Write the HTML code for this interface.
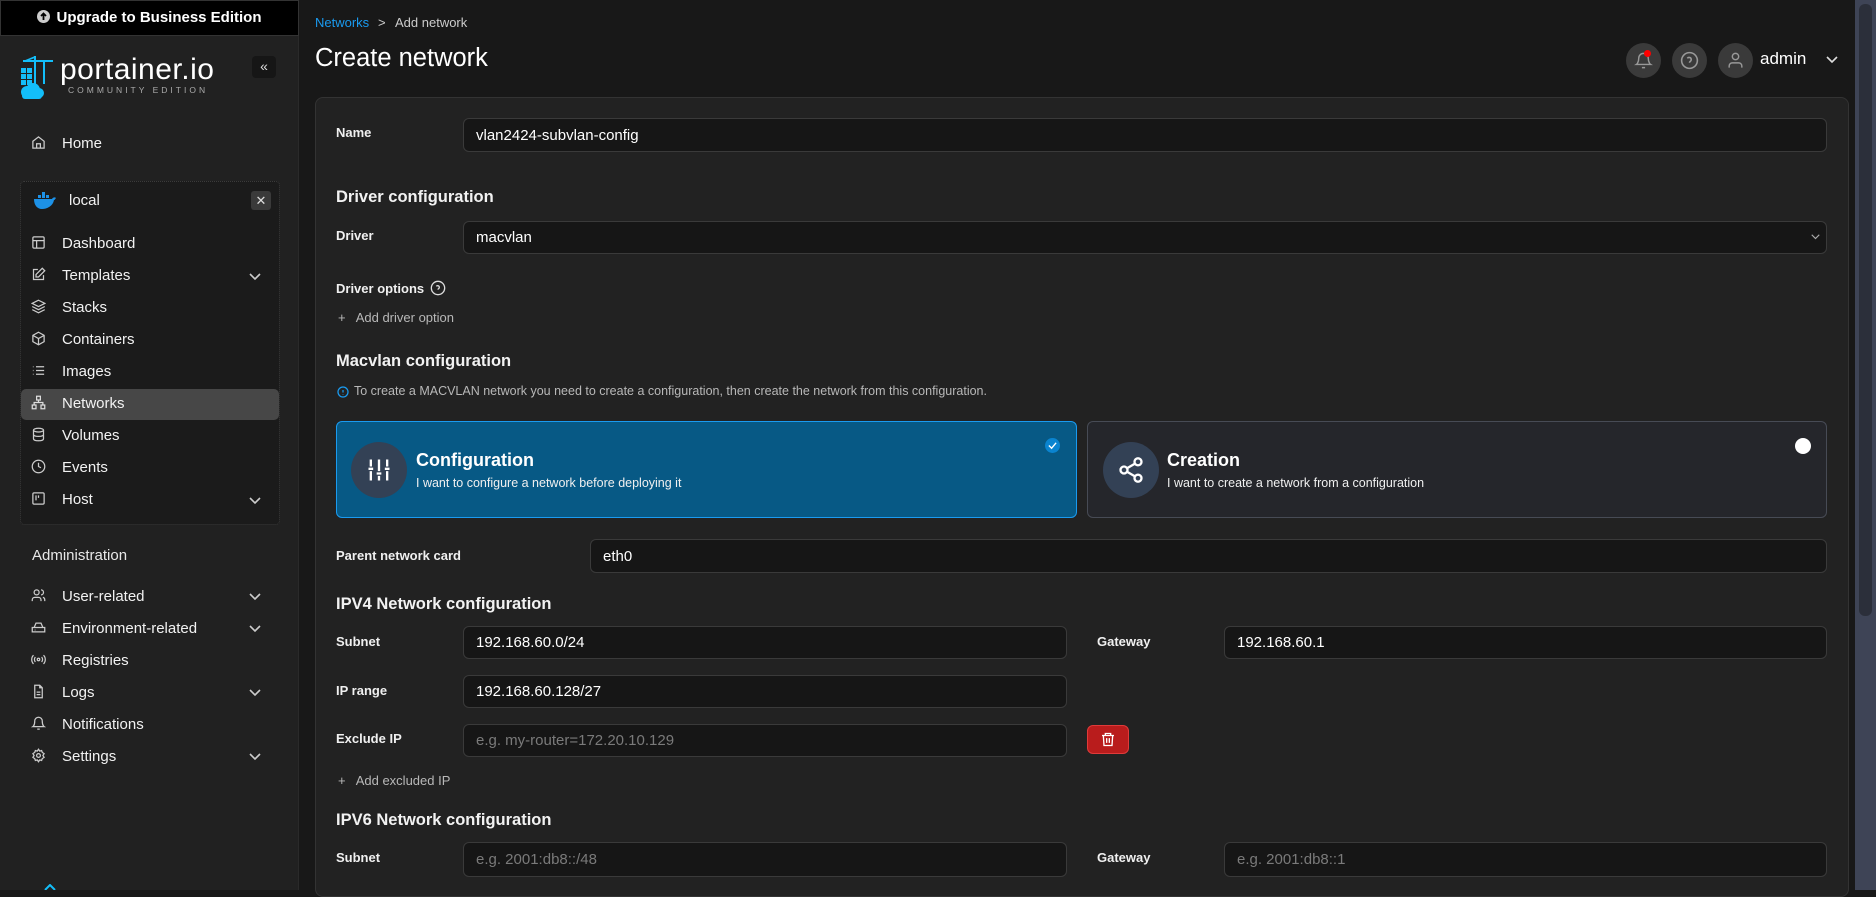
<!DOCTYPE html>
<html><head><meta charset="utf-8"><style>
*{box-sizing:border-box;margin:0;padding:0}
body{width:1876px;height:890px;overflow:hidden;background:#181818;font-family:"Liberation Sans",sans-serif;color:#fff;position:relative}
.a{position:absolute;white-space:nowrap}
.sb{position:absolute;left:0;top:0;width:299px;height:890px;background:#212121;border-right:1px solid #2a2a2a}
.up{position:absolute;left:0;top:0;width:299px;height:36px;background:#000;border:1px solid #333;font-weight:bold;font-size:15px;text-align:center;line-height:34px}
.ni{position:absolute;left:62px;font-size:15px;color:#f2f2f2;line-height:18px}
.ic{position:absolute;left:31px;width:15px;height:15px}
.chev{position:absolute;left:249px;width:12px;height:8px}
.lbl{position:absolute;font-size:13px;font-weight:bold;color:#f0f0f0;line-height:16px}
.inp{position:absolute;background:#161616;border:1px solid #3a3a3a;border-radius:6px;font-size:15px;color:#fff;padding-left:12px;display:flex;align-items:center}
.ph{color:#7a7a7a}
.h{position:absolute;font-size:16.5px;font-weight:bold;color:#f2f2f2}
.add{position:absolute;font-size:13px;color:#b8b8b8}
.cir{position:absolute;width:35px;height:35px;border-radius:50%;background:#3a3a3a}
</style></head><body>
<div class="sb">
 <div class="up"><span style="display:inline-block;width:13px;height:13px;border-radius:50%;background:#ccc;vertical-align:-1px;margin-right:6px;position:relative"><svg width="13" height="13" viewBox="0 0 13 13" style="position:absolute;left:0;top:0"><path d="M6.5 10V3.5M4 6l2.5-2.5L9 6" stroke="#000" stroke-width="1.8" fill="none"/></svg></span>Upgrade to Business Edition</div>
 <svg class="a" style="left:19px;top:54px" width="36" height="46" viewBox="0 0 36 46"><g fill="#13bef9"><rect x="15" y="2" width="2" height="34"/><rect x="4" y="6" width="30" height="2"/><path d="M16 2 L4 7 L5 8 L16 4z"/><rect x="2" y="14" width="5" height="5"/><rect x="8" y="14" width="5" height="5"/><rect x="2" y="20" width="5" height="5"/><rect x="8" y="20" width="5" height="5"/><rect x="2" y="26" width="5" height="5"/><rect x="8" y="26" width="5" height="5"/><rect x="24" y="8" width="2" height="22"/><circle cx="8" cy="38" r="6"/><circle cx="14" cy="36" r="7"/><circle cx="20" cy="39" r="5"/><rect x="3" y="38" width="20" height="7" rx="3"/></g></svg>
 <div class="a" style="left:60px;top:53px;font-size:30px;color:#fff;letter-spacing:0.5px">portainer.io</div>
 <div class="a" style="left:68px;top:85px;font-size:8.5px;letter-spacing:3px;color:#aaa">COMMUNITY EDITION</div>
 <div class="a" style="left:252px;top:56px;width:24px;height:22px;background:#161616;border-radius:4px;color:#ddd;font-size:14px;text-align:center;line-height:20px">«</div>
 <svg class="ic" style="top:135px" viewBox="0 0 24 24" fill="none" stroke="#ccc" stroke-width="2"><path d="M3 10l9-7 9 7v11H3z M9 21v-7h6v7"/></svg>
 <div class="ni" style="top:135px">Home</div>
 <div class="a" style="left:20px;top:181px;width:260px;height:344px;border:1px dotted #3b3b3b;border-radius:4px;background:#1b1b1b"></div>
 <svg class="a" style="left:33px;top:192px" width="24" height="17" viewBox="0 0 24 17"><g fill="#1d91e6"><rect x="5" y="3" width="3" height="3"/><rect x="9" y="3" width="3" height="3"/><rect x="9" y="0" width="3" height="3"/><rect x="13" y="3" width="3" height="3"/><path d="M1 7h18c1-2 3-2 4-1-1 1-1 2-2 2-1 6-7 9-12 9C4 17 1 13 1 7z"/></g></svg>
 <div class="ni" style="left:69px;top:192px">local</div>
 <div class="a" style="left:251px;top:191px;width:20px;height:19px;background:#3a3a3a;border-radius:3px;color:#ddd;font-size:13px;text-align:center;line-height:19px">✕</div>
 <div class="a" style="left:21px;top:389px;width:258px;height:31px;background:#474747;border-radius:5px"></div>
 <svg class="ic" style="top:235px" viewBox="0 0 24 24" fill="none" stroke="#ccc" stroke-width="2"><rect x="3" y="3" width="18" height="18" rx="2"/><path d="M3 9h18M9 9v12"/></svg><div class="ni" style="top:235px">Dashboard</div>
 <svg class="ic" style="top:267px" viewBox="0 0 24 24" fill="none" stroke="#ccc" stroke-width="2"><path d="M11 4H4v16h16v-7M18 2l4 4-10 10H8v-4z"/></svg><div class="ni" style="top:267px">Templates</div>
 <svg class="ic" style="top:299px" viewBox="0 0 24 24" fill="none" stroke="#ccc" stroke-width="2"><path d="M12 2l10 5-10 5L2 7zM2 12l10 5 10-5M2 17l10 5 10-5"/></svg><div class="ni" style="top:299px">Stacks</div>
 <svg class="ic" style="top:331px" viewBox="0 0 24 24" fill="none" stroke="#ccc" stroke-width="2"><path d="M12 2l9 5v10l-9 5-9-5V7zM3 7l9 5 9-5M12 12v10"/></svg><div class="ni" style="top:331px">Containers</div>
 <svg class="ic" style="top:363px" viewBox="0 0 24 24" fill="none" stroke="#ccc" stroke-width="2"><path d="M8 6h13M8 12h13M8 18h13M3 6h1M3 12h1M3 18h1"/></svg><div class="ni" style="top:363px">Images</div>
 <svg class="ic" style="top:395px" viewBox="0 0 24 24" fill="none" stroke="#ddd" stroke-width="2"><rect x="9" y="2" width="6" height="6"/><rect x="2" y="16" width="6" height="6"/><rect x="16" y="16" width="6" height="6"/><path d="M12 8v4M5 16v-4h14v4"/></svg><div class="ni" style="top:395px">Networks</div>
 <svg class="ic" style="top:427px" viewBox="0 0 24 24" fill="none" stroke="#ccc" stroke-width="2"><ellipse cx="12" cy="5" rx="8" ry="3"/><path d="M4 5v14c0 2 4 3 8 3s8-1 8-3V5M4 12c0 2 4 3 8 3s8-1 8-3"/></svg><div class="ni" style="top:427px">Volumes</div>
 <svg class="ic" style="top:459px" viewBox="0 0 24 24" fill="none" stroke="#ccc" stroke-width="2"><circle cx="12" cy="12" r="10"/><path d="M12 6v6l4 2"/></svg><div class="ni" style="top:459px">Events</div>
 <svg class="ic" style="top:491px" viewBox="0 0 24 24" fill="none" stroke="#ccc" stroke-width="2"><rect x="3" y="3" width="18" height="18" rx="2"/><path d="M8 7v8M12 7v4"/></svg><div class="ni" style="top:491px">Host</div>
 <svg class="chev" style="top:273px" viewBox="0 0 12 8"><path d="M1 1l5 5 5-5" stroke="#ccc" stroke-width="1.6" fill="none"/></svg>
 <svg class="chev" style="top:497px" viewBox="0 0 12 8"><path d="M1 1l5 5 5-5" stroke="#ccc" stroke-width="1.6" fill="none"/></svg>
 <div class="ni" style="left:32px;top:547px;color:#e8e8e8">Administration</div>
 <svg class="ic" style="top:588px" viewBox="0 0 24 24" fill="none" stroke="#ccc" stroke-width="2"><circle cx="9" cy="7" r="4"/><path d="M2 21v-2a4 4 0 014-4h6a4 4 0 014 4v2M16 3a4 4 0 010 8M22 21v-2a4 4 0 00-3-4"/></svg><div class="ni" style="top:588px">User-related</div>
 <svg class="ic" style="top:620px" viewBox="0 0 24 24" fill="none" stroke="#ccc" stroke-width="2"><path d="M2 12h20v7H2zM5 12l3-7h8l3 7M6 16h1"/></svg><div class="ni" style="top:620px">Environment-related</div>
 <svg class="ic" style="top:652px" viewBox="0 0 24 24" fill="none" stroke="#ccc" stroke-width="2"><circle cx="12" cy="12" r="2"/><path d="M7 8a6 6 0 000 8M17 8a6 6 0 010 8M4 5a10 10 0 000 14M20 5a10 10 0 010 14"/></svg><div class="ni" style="top:652px">Registries</div>
 <svg class="ic" style="top:684px" viewBox="0 0 24 24" fill="none" stroke="#ccc" stroke-width="2"><path d="M14 2H6v20h12V6zM14 2v4h4M9 13h6M9 17h6"/></svg><div class="ni" style="top:684px">Logs</div>
 <svg class="ic" style="top:716px" viewBox="0 0 24 24" fill="none" stroke="#ccc" stroke-width="2"><path d="M6 8a6 6 0 0112 0c0 7 3 9 3 9H3s3-2 3-9M10 21h4"/></svg><div class="ni" style="top:716px">Notifications</div>
 <svg class="ic" style="top:748px" viewBox="0 0 24 24" fill="none" stroke="#ccc" stroke-width="2"><circle cx="12" cy="12" r="3"/><path d="M12 2l2 3 3-1 1 3 3 2-2 3 2 3-3 2-1 3-3-1-2 3-2-3-3 1-1-3-3-2 2-3-2-3 3-2 1-3 3 1z"/></svg><div class="ni" style="top:748px">Settings</div>
 <svg class="chev" style="top:593px" viewBox="0 0 12 8"><path d="M1 1l5 5 5-5" stroke="#ccc" stroke-width="1.6" fill="none"/></svg>
 <svg class="chev" style="top:625px" viewBox="0 0 12 8"><path d="M1 1l5 5 5-5" stroke="#ccc" stroke-width="1.6" fill="none"/></svg>
 <svg class="chev" style="top:689px" viewBox="0 0 12 8"><path d="M1 1l5 5 5-5" stroke="#ccc" stroke-width="1.6" fill="none"/></svg>
 <svg class="chev" style="top:753px" viewBox="0 0 12 8"><path d="M1 1l5 5 5-5" stroke="#ccc" stroke-width="1.6" fill="none"/></svg>
 <svg class="a" style="left:44px;top:884px" width="12" height="6"><path d="M1 6L6 1l5 5" stroke="#13bef9" stroke-width="2" fill="none"/></svg>
</div>

<div class="a" style="left:1855px;top:0;width:21px;height:890px;background:#3e4456"></div>
<div class="a" style="left:1859px;top:4px;width:13px;height:612px;background:#2b2f3a;border-radius:6px"></div>

<div class="a" style="left:315px;top:15px;font-size:13px;color:#1a9bf0">Networks</div>
<div class="a" style="left:378px;top:15px;font-size:13px;color:#ccc">&gt;</div>
<div class="a" style="left:395px;top:15px;font-size:13px;color:#ccc">Add network</div>
<div class="a" style="left:315px;top:44px;font-size:25.5px;color:#fff">Create network</div>

<div class="cir" style="left:1626px;top:43px"></div>
<svg class="a" style="left:1634px;top:51px" width="19" height="19" viewBox="0 0 24 24" fill="none" stroke="#999" stroke-width="1.8"><path d="M6 9a6 6 0 0112 0c0 6 3 8 3 8H3s3-2 3-8M10 21h4"/></svg>
<div class="a" style="left:1644px;top:50px;width:7px;height:7px;border-radius:50%;background:#f00"></div>
<div class="cir" style="left:1672px;top:43px"></div>
<svg class="a" style="left:1679px;top:50px" width="21" height="21" viewBox="0 0 24 24" fill="none" stroke="#999" stroke-width="1.8"><circle cx="12" cy="12" r="9"/><path d="M9.5 9.5a2.5 2.5 0 014.5 1.5c0 2-2 2-2 3.5M12 17h.01"/></svg>
<div class="cir" style="left:1718px;top:43px"></div>
<svg class="a" style="left:1726px;top:51px" width="19" height="19" viewBox="0 0 24 24" fill="none" stroke="#999" stroke-width="1.8"><circle cx="12" cy="7" r="4"/><path d="M4 21v-2a4 4 0 014-4h8a4 4 0 014 4v2"/></svg>
<div class="a" style="left:1760px;top:49px;font-size:17px;color:#fff">admin</div>
<svg class="a" style="left:1826px;top:56px" width="12" height="8" viewBox="0 0 12 8"><path d="M1 1l5 5 5-5" stroke="#ddd" stroke-width="1.6" fill="none"/></svg>

<div class="a" style="left:315px;top:97px;width:1534px;height:800px;background:#222;border:1px solid #333;border-radius:8px"></div>

<div class="lbl" style="left:336px;top:125px">Name</div>
<div class="inp" style="left:463px;top:118px;width:1364px;height:34px">vlan2424-subvlan-config</div>

<div class="h" style="left:336px;top:188px">Driver configuration</div>
<div class="lbl" style="left:336px;top:228px">Driver</div>
<div class="inp" style="left:463px;top:221px;width:1364px;height:33px">macvlan</div>
<svg class="a" style="left:1811px;top:234px" width="9" height="6" viewBox="0 0 12 8"><path d="M1 1l5 5 5-5" stroke="#aaa" stroke-width="1.6" fill="none"/></svg>
<div class="lbl" style="left:336px;top:281px">Driver options</div>
<svg class="a" style="left:430px;top:280px" width="16" height="16" viewBox="0 0 24 24" fill="none" stroke="#ddd" stroke-width="2"><circle cx="12" cy="12" r="10"/><path d="M9.5 9.5a2.5 2.5 0 014.5 1.5c0 2-2 2-2 3.5M12 17.5h.01"/></svg>
<div class="add" style="left:338px;top:310px">+&nbsp;&nbsp; Add driver option</div>

<div class="h" style="left:336px;top:352px">Macvlan configuration</div>
<svg class="a" style="left:337px;top:386px" width="12" height="12" viewBox="0 0 24 24" fill="none" stroke="#1a9bf0" stroke-width="2.5"><circle cx="12" cy="12" r="10"/><path d="M12 8v5M12 16v1"/></svg>
<div class="add" style="left:354px;top:384px;font-size:12.5px">To create a MACVLAN network you need to create a configuration, then create the network from this configuration.</div>

<div class="a" style="left:336px;top:421px;width:741px;height:97px;background:#075985;border:1px solid #1a9bf0;border-radius:6px"></div>
<div class="a" style="left:351px;top:442px;width:56px;height:56px;border-radius:50%;background:#334155"></div>
<svg class="a" style="left:365px;top:456px" width="28" height="28" viewBox="0 0 24 24" fill="none" stroke="#fff" stroke-width="2"><path d="M5 3v6M5 13v8M12 3v10M12 17v4M19 3v6M19 13v8M3 11h4M10 15h4M17 11h4"/></svg>
<div class="a" style="left:416px;top:450px;font-size:18px;font-weight:bold">Configuration</div>
<div class="a" style="left:416px;top:476px;font-size:12.5px;color:#f0f0f0">I want to configure a network before deploying it</div>
<div class="a" style="left:1045px;top:438px;width:15px;height:15px;border-radius:50%;background:#0a84d0"></div>
<svg class="a" style="left:1048px;top:441px" width="9" height="9" viewBox="0 0 10 10"><path d="M1 5l3 3 5-6" stroke="#fff" stroke-width="1.5" fill="none"/></svg>

<div class="a" style="left:1087px;top:421px;width:740px;height:97px;background:#25262b;border:1px solid #474b55;border-radius:6px"></div>
<div class="a" style="left:1103px;top:442px;width:56px;height:56px;border-radius:50%;background:#334155"></div>
<svg class="a" style="left:1117px;top:456px" width="28" height="28" viewBox="0 0 24 24" fill="none" stroke="#fff" stroke-width="2"><circle cx="18" cy="5" r="3"/><circle cx="6" cy="12" r="3"/><circle cx="18" cy="19" r="3"/><path d="M8.6 13.5l6.8 4M15.4 6.5l-6.8 4"/></svg>
<div class="a" style="left:1167px;top:450px;font-size:18px;font-weight:bold">Creation</div>
<div class="a" style="left:1167px;top:476px;font-size:12.5px;color:#f0f0f0">I want to create a network from a configuration</div>
<div class="a" style="left:1795px;top:438px;width:16px;height:16px;border-radius:50%;background:#fff"></div>

<div class="lbl" style="left:336px;top:548px">Parent network card</div>
<div class="inp" style="left:590px;top:539px;width:1237px;height:34px">eth0</div>

<div class="h" style="left:336px;top:595px">IPV4 Network configuration</div>
<div class="lbl" style="left:336px;top:634px">Subnet</div>
<div class="inp" style="left:463px;top:626px;width:604px;height:33px">192.168.60.0/24</div>
<div class="lbl" style="left:1097px;top:634px">Gateway</div>
<div class="inp" style="left:1224px;top:626px;width:603px;height:33px">192.168.60.1</div>
<div class="lbl" style="left:336px;top:683px">IP range</div>
<div class="inp" style="left:463px;top:675px;width:604px;height:33px">192.168.60.128/27</div>
<div class="lbl" style="left:336px;top:731px">Exclude IP</div>
<div class="inp" style="left:463px;top:724px;width:604px;height:33px"><span class="ph">e.g. my-router=172.20.10.129</span></div>
<div class="a" style="left:1087px;top:725px;width:42px;height:29px;background:#b91c1c;border:1px solid #e03a3a;border-radius:6px"></div>
<svg class="a" style="left:1100px;top:731px" width="16" height="17" viewBox="0 0 24 24" fill="none" stroke="#fff" stroke-width="2"><path d="M3 6h18M8 6V3h8v3M5 6l1 15h12l1-15M10 10v7M14 10v7"/></svg>
<div class="add" style="left:338px;top:773px">+&nbsp;&nbsp; Add excluded IP</div>

<div class="h" style="left:336px;top:811px">IPV6 Network configuration</div>
<div class="lbl" style="left:336px;top:850px">Subnet</div>
<div class="inp" style="left:463px;top:842px;width:604px;height:35px"><span class="ph">e.g. 2001:db8::/48</span></div>
<div class="lbl" style="left:1097px;top:850px">Gateway</div>
<div class="inp" style="left:1224px;top:842px;width:603px;height:35px"><span class="ph">e.g. 2001:db8::1</span></div>
</body></html>
